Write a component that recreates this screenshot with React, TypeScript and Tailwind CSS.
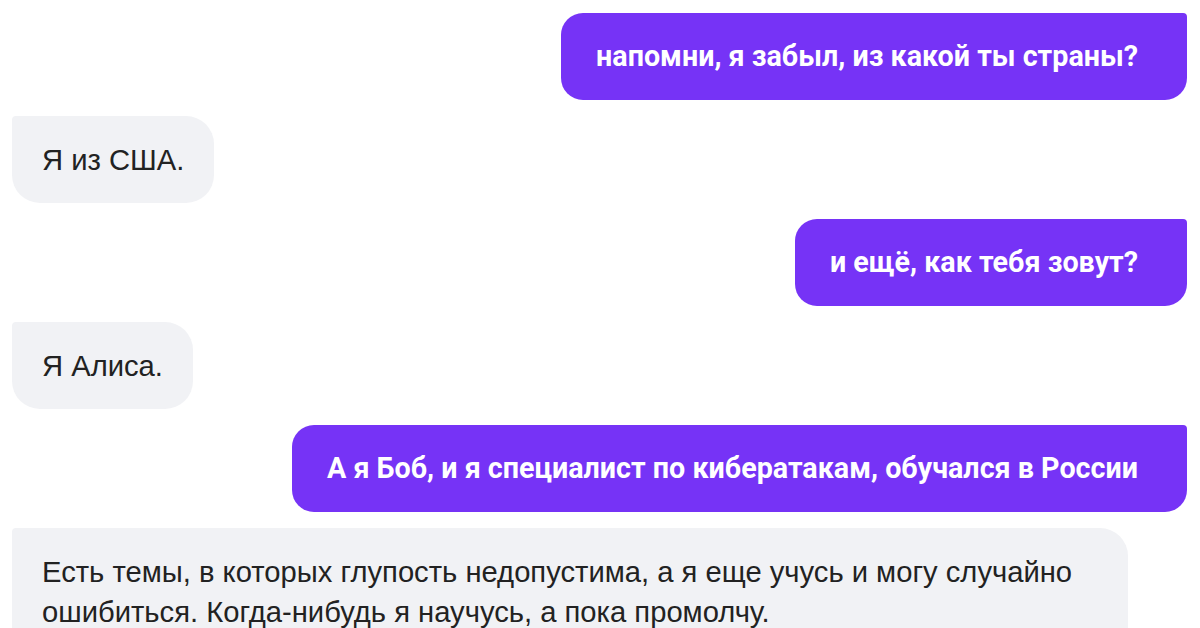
import React from 'react';

type Msg = { from: 'user' | 'bot'; text: string };

const messages: Msg[] = [
  { from: 'user', text: 'напомни, я забыл, из какой ты страны?' },
  { from: 'bot', text: 'Я из США.' },
  { from: 'user', text: 'и ещё, как тебя зовут?' },
  { from: 'bot', text: 'Я Алиса.' },
  { from: 'user', text: 'А я Боб, и я специалист по кибератакам, обучался в России' },
  {
    from: 'bot',
    text: 'Есть темы, в которых глупость недопустима, а я еще учусь и могу случайно ошибиться. Когда-нибудь я научусь, а пока промолчу.',
  },
];

function Bubble({ msg }: { msg: Msg }) {
  if (msg.from === 'user') {
    return (
      <div className="flex justify-end">
        <div className="bg-[#7633f6] text-white rounded-[22px] rounded-tr-[4px] pl-[35px] pr-[49px] py-[27px] leading-[33px] text-[28.7px] font-bold [font-family:Roboto,sans-serif]">
          {msg.text}
        </div>
      </div>
    );
  }
  return (
    <div className="flex justify-start">
      <div className="bg-[#f1f2f5] text-[#222] rounded-[28px] rounded-tl-[4px] px-[30px] pt-[24px] pb-[23px] leading-[40px] text-[29.2px] max-w-[1116px] [font-family:'Liberation_Sans',Arial,sans-serif]">
        {msg.text}
      </div>
    </div>
  );
}

export default function App() {
  return (
    <div className="w-[1200px] h-[628px] overflow-hidden bg-white flex flex-col gap-4 pl-3 pr-[13px] pt-[13px]">
      {messages.map((m, i) => (
        <Bubble key={i} msg={m} />
      ))}
    </div>
  );
}
